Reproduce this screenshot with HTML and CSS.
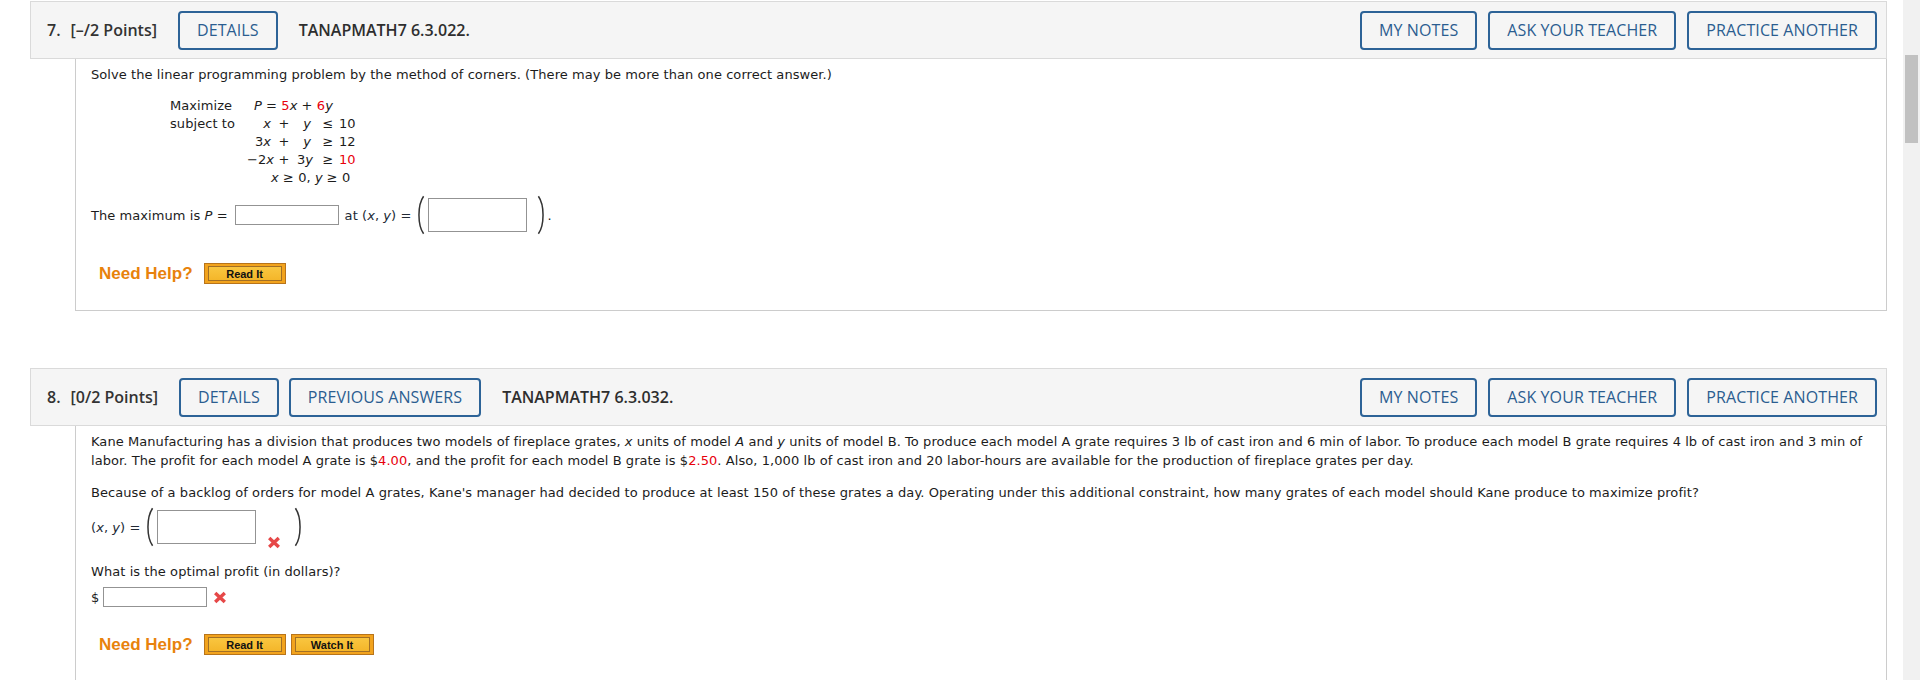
FILE: index.html
```html
<!DOCTYPE html>
<html lang="en">
<head>
<meta charset="utf-8">
<title>WebAssign</title>
<link rel="stylesheet" href="styles.css">
</head>
<body>
<div class="page">

  <section class="question">
    <div class="q-head">
      <span class="q-num">7.</span>
      <span class="q-points">[–/2 Points]</span>
      <div class="q-btns">
        <button class="q-btn">DETAILS</button>
      </div>
      <span class="q-code">TANAPMATH7 6.3.022.</span>
      <div class="q-btns q-btns-right">
        <button class="q-btn">MY NOTES</button>
        <button class="q-btn">ASK YOUR TEACHER</button>
        <button class="q-btn">PRACTICE ANOTHER</button>
      </div>
    </div>
    <div class="q-body q7-body">
      <p class="para">Solve the linear programming problem by the method of corners. (There may be more than one correct answer.)</p>
      <div class="lp">
        <div class="lp-label">Maximize</div>
        <div class="lp-obj"><i>P</i> = <span class="red">5</span><i>x</i> + <span class="red">6</span><i>y</i></div>

        <div class="lp-label">subject to</div>
        <div class="c1"><i>x</i></div><div class="c2">+</div><div class="c3"><i>y</i></div><div class="c4">≤</div><div class="c5">10</div>

        <div class="lp-label"></div>
        <div class="c1">3<i>x</i></div><div class="c2">+</div><div class="c3"><i>y</i></div><div class="c4">≥</div><div class="c5">12</div>

        <div class="lp-label"></div>
        <div class="c1">−2<i>x</i></div><div class="c2">+</div><div class="c3">3<i>y</i></div><div class="c4">≥</div><div class="c5 red">10</div>

        <div class="lp-label"></div>
        <div class="lp-nonneg"><i>x</i> ≥ 0, <i>y</i> ≥ 0</div>
      </div>

      <div class="answer-row">
        <span class="txt">The maximum is <i>P</i> =</span>
        <span class="ans ans-sm gap-l"></span>
        <span class="math gap-l2">at (<i>x</i>, <i>y</i>) =</span>
        <svg class="paren paren-l" viewBox="0 0 10 40"><path d="M8.6 1.2 C2.4 10 2.4 30 8.6 38.8" /></svg>
        <span class="ans ans-tall"></span>
        <svg class="paren paren-r7" viewBox="0 0 10 40"><path d="M1.4 1.2 C7.6 10 7.6 30 1.4 38.8" /></svg>
        <span class="txt">.</span>
      </div>

      <div class="help-row help7">
        <span class="need-help">Need Help?</span>
        <span class="help-btn"><span class="help-btn-in">Read It</span></span>
      </div>
    </div>
  </section>

  <section class="question">
    <div class="q-head">
      <span class="q-num">8.</span>
      <span class="q-points">[0/2 Points]</span>
      <div class="q-btns">
        <button class="q-btn">DETAILS</button>
        <button class="q-btn">PREVIOUS ANSWERS</button>
      </div>
      <span class="q-code">TANAPMATH7 6.3.032.</span>
      <div class="q-btns q-btns-right">
        <button class="q-btn">MY NOTES</button>
        <button class="q-btn">ASK YOUR TEACHER</button>
        <button class="q-btn">PRACTICE ANOTHER</button>
      </div>
    </div>
    <div class="q-body q8-body">
      <p class="para">Kane Manufacturing has a division that produces two models of fireplace grates, <i>x</i> units of model <i>A</i> and <i>y</i> units of model B. To produce each model A grate requires 3 lb of cast iron and 6 min of labor. To produce each model B grate requires 4 lb of cast iron and 3 min of labor. The profit for each model A grate is $<span class="red">4.00</span>, and the profit for each model B grate is $<span class="red">2.50</span>. Also, 1,000 lb of cast iron and 20 labor-hours are available for the production of fireplace grates per day.</p>
      <p class="para p-gap">Because of a backlog of orders for model A grates, Kane's manager had decided to produce at least 150 of these grates a day. Operating under this additional constraint, how many grates of each model should Kane produce to maximize profit?</p>

      <div class="answer-row xy-row">
        <span class="math">(<i>x</i>, <i>y</i>) =</span>
        <svg class="paren paren-l8" viewBox="0 0 10 40"><path d="M8.6 1.2 C2.4 10 2.4 30 8.6 38.8" /></svg>
        <span class="ans ans-tall"></span>
        <svg class="wrong wrong-low" viewBox="0 0 14 13"><path d="M2.2 2 L11.8 11 M11.8 2 L2.2 11" /></svg>
        <svg class="paren paren-r8" viewBox="0 0 10 40"><path d="M1.4 1.2 C7.6 10 7.6 30 1.4 38.8" /></svg>
      </div>

      <p class="para q-ask">What is the optimal profit (in dollars)?</p>

      <div class="dollar-row">
        <span class="txt">$</span>
        <span class="ans ans-sm ans-dollar"></span>
        <svg class="wrong" viewBox="0 0 14 13"><path d="M2.2 2 L11.8 11 M11.8 2 L2.2 11" /></svg>
      </div>

      <div class="help-row help8">
        <span class="need-help">Need Help?</span>
        <span class="help-btn"><span class="help-btn-in">Read It</span></span>
        <span class="help-btn help-btn-w"><span class="help-btn-in">Watch It</span></span>
      </div>
    </div>
  </section>

</div>

<div class="scrollbar"><div class="scroll-thumb"></div></div>
</body>
</html>
```

FILE: styles.css
```css
html, body {
  margin: 0;
  padding: 0;
  overflow: hidden;
  background: #ffffff;
}

body {
  font-family: "DejaVu Sans", Verdana, sans-serif;
  font-size: 13px;
  letter-spacing: 0.07px;
  color: #1c1c1c;
}

.page {
  padding: 1px 33px 0 30px;
}

.question + .question {
  margin-top: 57px;
}

/* ---------- header ---------- */
.q-head {
  display: flex;
  align-items: center;
  height: 56px;
  border: 1px solid #dadada;
  background: #f5f5f5;
  padding: 0 9px 0 16px;
  font-family: "Open Sans", "Liberation Sans", sans-serif;
  font-size: 16px;
  letter-spacing: 0;
  color: #333333;
}

.q-num {
  font-weight: 600;
  margin-right: 10px;
}

.q-points {
  font-weight: 600;
  margin-right: 21px;
}

.q-btns {
  display: flex;
  gap: 10px;
}

.q-btns-right {
  margin-left: auto;
  gap: 11px;
}

.q-btn {
  height: 39px;
  padding: 0 17px;
  border: 2px solid #2d6397;
  border-radius: 4px;
  background: transparent;
  font-family: "Open Sans", "Liberation Sans", sans-serif;
  font-size: 16px;
  letter-spacing: 0.1px;
  color: #2b5d90;
  cursor: pointer;
}

.q-code {
  font-weight: 600;
  margin-left: 21px;
  color: #2e2e2e;
}

/* ---------- body ---------- */
.q-body {
  margin-left: 45px;
  border: 1px solid #cccccc;
  border-top: 0;
  padding: 6px 16px 26px 15px;
}

.q8-body {
  padding-bottom: 60px;
}

.para {
  margin: 0;
  line-height: 19px;
}

.p-gap {
  margin-top: 13px;
}

.red {
  color: #e8000b;
}

i {
  font-style: italic;
}

/* linear program */
.lp {
  display: grid;
  grid-template-columns: 77px 24px 26px 14px 26px auto;
  grid-auto-rows: 18px;
  align-items: center;
  margin: 13px 0 0 79px;
  line-height: 18px;
}

.lp-obj {
  grid-column: 2 / 7;
  padding-left: 7px;
}

.c1, .c3 {
  text-align: right;
  white-space: nowrap;
}

.c2 {
  text-align: center;
}

.c4 {
  padding-left: 8px;
  text-align: center;
}

.c5 {
  padding-left: 2px;
}

.lp-nonneg {
  grid-column: 2 / 7;
  justify-self: start;
  padding-left: 24px;
  white-space: nowrap;
}

/* answers */
.answer-row {
  display: flex;
  align-items: center;
  height: 38px;
  margin-top: 9px;
  white-space: nowrap;
}

.xy-row {
  margin-top: 6px;
}

.math {
  color: #222a35;
}

.ans {
  display: inline-block;
  box-sizing: border-box;
  border: 1px solid #939393;
  background: #ffffff;
}

.ans-sm {
  width: 104px;
  height: 20px;
}

.ans-tall {
  width: 99px;
  height: 34px;
}

.gap-l {
  margin-left: 7px;
}

.gap-l2 {
  margin-left: 6px;
}

.paren {
  width: 10px;
  height: 40px;
  flex: none;
}

.paren path {
  fill: none;
  stroke: #333333;
  stroke-width: 1.5;
}

.paren-l {
  margin: 0 3px 0 4px;
}

.paren-r7 {
  margin-left: 10px;
}

.paren-l8 {
  margin: 0 3px 0 4px;
}

.paren-r8 {
  margin-left: 13px;
}

.wrong {
  width: 14px;
  height: 13px;
  flex: none;
}

.wrong path {
  fill: none;
  stroke: #e64848;
  stroke-width: 3.4;
}

.wrong-low {
  align-self: flex-end;
  margin: 0 0 -3px 11px;
}

.q-ask {
  margin-top: 16px;
}

.dollar-row {
  display: flex;
  align-items: center;
  height: 20px;
  margin-top: 6px;
}

.ans-dollar {
  margin: 0 6px 0 4px;
}

/* need help */
.help-row {
  display: flex;
  align-items: center;
  margin-left: 8px;
  gap: 5px;
  letter-spacing: 0;
}

.help7 {
  margin-top: 29px;
}

.help8 {
  margin-top: 27px;
}

.need-help {
  font-family: "Liberation Sans", Arial, sans-serif;
  font-weight: bold;
  font-size: 17px;
  color: #e8820c;
  margin-right: 6px;
}

.help-btn {
  display: inline-flex;
  box-sizing: border-box;
  width: 82px;
  height: 21px;
  padding: 2px 3px;
  border: 1px solid #b8741a;
  background: #f2a31d;
}

.help-btn-w {
  width: 83px;
}

.help-btn-in {
  flex: 1;
  display: flex;
  align-items: center;
  justify-content: center;
  border: 1px solid #a26f25;
  background: linear-gradient(#f9c640, #f4b62a);
  font-family: "Liberation Sans", Arial, sans-serif;
  font-weight: bold;
  font-size: 11px;
  color: #111111;
}

/* fake scrollbar */
.scrollbar {
  position: fixed;
  top: 0;
  right: 0;
  width: 17px;
  height: 100%;
  background: #f1f1f1;
}

.scroll-thumb {
  margin: 55px 2px 0 2px;
  height: 88px;
  background: #c1c1c1;
}
```
